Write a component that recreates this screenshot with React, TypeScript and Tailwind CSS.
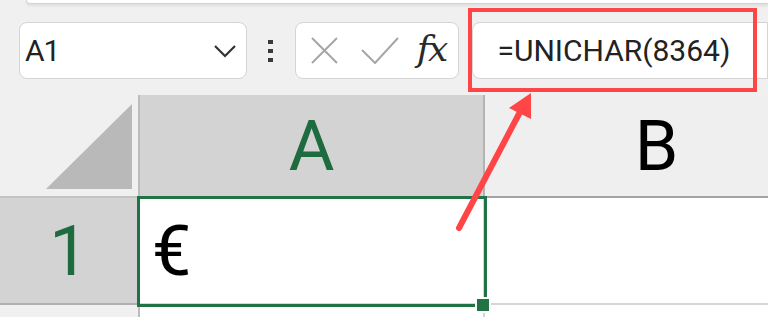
import React from "react";

export default function App() {
  return (
    <div className="relative w-[768px] h-[317px] overflow-hidden bg-[#f0f0f0] font-['Roboto',sans-serif]">
      {/* top ribbon edge */}
      <div className="ml-[26px] h-[4px] bg-white rounded-bl-[8px] border-b border-l border-[#d2d2d2] shadow-[0_2px_3px_rgba(0,0,0,0.08)]" />

      {/* formula bar row */}
      <div className="mt-[18px] flex h-[57px] items-stretch">
        <div className="ml-[19px] w-[231px] flex items-center justify-between rounded-[8px] border border-[#d4d4d4] bg-white pl-[5px] pr-[9px]">
          <span className="text-[30px] leading-none text-[#222] tracking-[-1px]">A1</span>
          <svg width="24" height="14" viewBox="0 0 24 14" className="mt-[1px]">
            <path d="M2 2 L12 12 L22 2" fill="none" stroke="#333" strokeWidth="2.2" />
          </svg>
        </div>
        <div className="w-[48px] flex flex-col items-center justify-center gap-[5px]">
          <div className="w-[5px] h-[4px] bg-[#3a3a3a]" />
          <div className="w-[5px] h-[4px] bg-[#3a3a3a]" />
          <div className="w-[5px] h-[4px] bg-[#3a3a3a]" />
        </div>
        <div className="w-[166px] flex items-center rounded-[8px] border border-[#d4d4d4] bg-white">
          <svg width="29" height="29" viewBox="0 0 29 29" className="ml-[14px]">
            <path d="M2 2 L27 27 M27 2 L2 27" stroke="#a6a6a6" strokeWidth="2" fill="none" />
          </svg>
          <svg width="38" height="27" viewBox="0 0 38 27" className="ml-[22px]">
            <path d="M1 13 L14 26 L37 1" stroke="#a6a6a6" strokeWidth="2" fill="none" />
          </svg>
          <span className="ml-[18px] font-['DejaVu_Serif',serif] italic text-[36px] leading-none text-[#2a2a2a] mb-[4px] tracking-[-2px]">
            fx
          </span>
        </div>
        <div className="ml-[13px] w-[300px] flex items-center rounded-l-[8px] border border-[#d4d4d4] bg-white pl-[25px]">
          <span className="text-[30px] leading-none text-[#222]">=UNICHAR(8364)</span>
        </div>
      </div>

      {/* grid */}
      <div className="mt-[16px] flex flex-col">
        {/* header row */}
        <div className="flex h-[101px]">
          <div className="w-[138px] shrink-0 bg-[#f0f0f0]">
            <svg width="138" height="101" viewBox="0 0 138 101" className="block">
              <polygon points="46,94 132,94 132,9" fill="#b9b9b9" />
            </svg>
          </div>
          <div className="w-[2px] shrink-0 bg-[#bdbdbd]" />
          <div className="w-[343px] shrink-0 flex items-center justify-center bg-[#d3d3d3] text-[70px] leading-none text-[#1e6b40]">
            A
          </div>
          <div className="w-[2px] shrink-0 bg-[#b3b3b3]" />
          <div className="w-[343px] shrink-0 flex items-center justify-center bg-[#efefef] text-[70px] leading-none text-black">
            B
          </div>
        </div>
        <div className="flex h-[2px]">
          <div className="w-[138px] shrink-0 bg-[#c4c4c4]" />
          <div className="w-[2px] shrink-0 bg-[#b0b0b0]" />
          <div className="flex-1 bg-[#a4a4a4]" />
        </div>
        {/* row 1 */}
        <div className="flex h-[105px]">
          <div className="w-[138px] shrink-0 flex items-center justify-center bg-[#d3d3d3] text-[70px] leading-none text-[#1e6b40]">
            1
          </div>
          <div className="w-[2px] shrink-0 bg-[#bdbdbd]" />
          <div className="w-[343px] shrink-0 flex items-center bg-white pl-[12px] text-[70px] leading-none text-black">
            €
          </div>
          <div className="w-[2px] shrink-0 bg-[#d4d4d4]" />
          <div className="w-[343px] shrink-0 bg-white" />
        </div>
        <div className="flex h-[2px]">
          <div className="w-[138px] shrink-0 bg-[#b0b0b0]" />
          <div className="w-[2px] shrink-0 bg-[#b0b0b0]" />
          <div className="flex-1 bg-[#d6d6d6]" />
        </div>
        {/* row 2 */}
        <div className="flex h-[20px]">
          <div className="w-[138px] shrink-0 bg-[#f0f0f0]" />
          <div className="w-[2px] shrink-0 bg-[#bdbdbd]" />
          <div className="w-[343px] shrink-0 bg-white" />
          <div className="w-[2px] shrink-0 bg-[#d4d4d4]" />
          <div className="w-[343px] shrink-0 bg-white" />
        </div>
      </div>

      {/* selection */}
      <div className="absolute left-[137px] top-[196px] w-[350px] h-[111px] border-[3px] border-[#217346]" />
      <div className="absolute left-[475px] top-[297px] w-[16px] h-[16px] bg-white p-[2px]">
        <div className="w-[12px] h-[12px] bg-[#217346]" />
      </div>

      {/* annotation */}
      <div className="absolute left-[468px] top-[8px] w-[289px] h-[84px] border-[4px] border-[#ff4545]" />
      <svg className="absolute left-0 top-0" width="768" height="317" viewBox="0 0 768 317">
        <line x1="459" y1="228" x2="521" y2="110" stroke="#ff4545" strokeWidth="6" strokeLinecap="round" />
        <polygon points="531,93 509,108 531,119" fill="#ff4545" />
      </svg>
    </div>
  );
}
